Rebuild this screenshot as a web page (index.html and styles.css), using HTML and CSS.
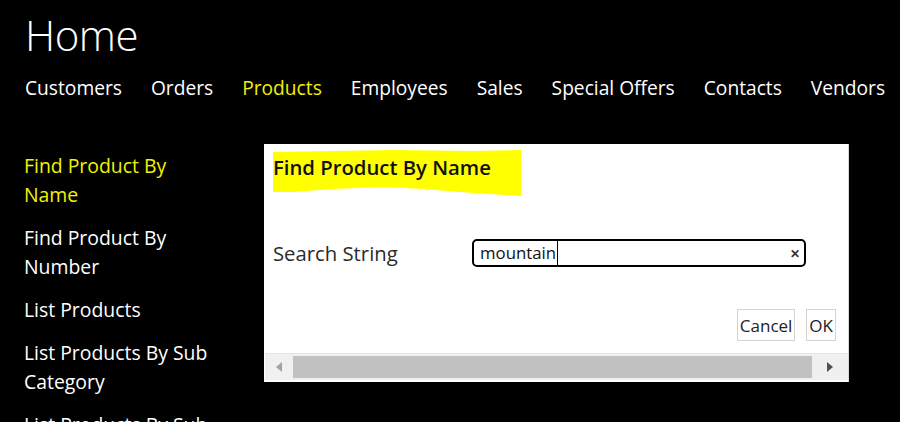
FILE: index.html
```html
<!DOCTYPE html>
<html>
<head>
<meta charset="utf-8">
<link rel="stylesheet" href="styles.css">
</head>
<body>
<header class="top">
  <h1 class="title">Home</h1>
  <nav class="nav">
    <a class="nav-item">Customers</a>
    <a class="nav-item">Orders</a>
    <a class="nav-item active">Products</a>
    <a class="nav-item">Employees</a>
    <a class="nav-item">Sales</a>
    <a class="nav-item">Special Offers</a>
    <a class="nav-item">Contacts</a>
    <a class="nav-item">Vendors</a>
  </nav>
</header>
<main class="main">
  <ul class="side">
    <li class="side-item active">Find Product By Name</li>
    <li class="side-item">Find Product By Number</li>
    <li class="side-item">List Products</li>
    <li class="side-item">List Products By Sub Category</li>
    <li class="side-item">List Products By Sub Model</li>
  </ul>
  <section class="panel">
    <div class="panel-body">
      <div class="heading-wrap"><h2 class="heading">Find Product By Name</h2></div>
      <div class="form-row">
        <label class="label">Search String</label>
        <div class="input">
          <span class="input-text">mountain</span><span class="caret"></span>
          <span class="clear">&#x2715;</span>
        </div>
      </div>
      <div class="buttons">
        <button class="btn">Cancel</button>
        <button class="btn">OK</button>
      </div>
    </div>
    <div class="hscroll">
      <div class="arrow-btn"><svg width="8" height="12" viewBox="0 0 8 12"><path d="M7 1 L1 6 L7 11 Z" fill="#a3a3a3"/></svg></div>
      <div class="thumb"></div>
      <div class="arrow-btn right"><svg width="8" height="12" viewBox="0 0 8 12"><path d="M1 1 L7 6 L1 11 Z" fill="#505050"/></svg></div>
    </div>
  </section>
</main>
</body>
</html>
```
FILE: styles.css
```css
* { box-sizing: border-box; }
html, body { margin: 0; padding: 0; }
body {
  background: #000;
  color: #fff;
  font-family: "Open Sans", "Noto Sans", sans-serif;
  width: 900px;
  height: 422px;
  overflow: hidden;
}
.top { padding: 10px 0 0 25px; }
.title {
  margin: 0;
  font-weight: 300;
  font-size: 42px;
  line-height: 50px;
  letter-spacing: -0.5px;
}
.nav {
  display: flex;
  gap: 29px;
  margin-top: 14px;
  font-size: 19.2px;
  line-height: 28px;
  white-space: nowrap;
}
.nav-item { color: #fff; }
.nav-item.active { color: #f2f200; }
.main {
  display: flex;
  margin-top: 42px;
}
.side {
  list-style: none;
  margin: 7px 0 0 0;
  padding: 0 0 0 24px;
  width: 264px;
  height: 280px;
  flex-shrink: 0;
  display: flex;
  flex-direction: column;
  gap: 14px;
  font-size: 19.4px;
  line-height: 29px;
}
.side-item { width: 192px; }
.side-item.active { color: #f2f200; }
.panel {
  width: 585px;
  height: 238px;
  background: #fff;
  color: #222;
  display: flex;
  flex-direction: column;
  border-right: 1px solid #d8d8d8;
}
.panel-body {
  flex: 1;
  padding: 6px 12px 0 9px;
}
.heading-wrap { display: flex; }
.heading {
  margin: 0;
  width: 248px;
  height: 47px;
  padding: 4px 0 0 0;
  background: #ffff00;
  font-size: 20.3px;
  font-weight: 600;
  line-height: 26px;
  color: #111;
  clip-path: polygon(0 2px, 60px 1px, 120px 0, 200px 1px, 248px 0, 248px 46px, 200px 43px, 150px 39px, 110px 37px, 60px 39px, 20px 42px, 0 42px);
}
.form-row {
  display: flex;
  align-items: center;
  margin-top: 42px;
}
.label {
  width: 199px;
  font-size: 20.3px;
  color: #2a2a2a;
}
.input {
  width: 334px;
  height: 28px;
  border: 2px solid #000;
  border-radius: 5px;
  display: flex;
  align-items: center;
  padding: 0 4px 0 6px;
  position: relative;
}
.input-text {
  font-size: 16.8px;
  color: #111;
  line-height: 20px;
}
.caret {
  width: 1px;
  height: 24px;
  background: #000;
  margin-left: 1px;
}
.clear {
  margin-left: auto;
  font-size: 12px;
  color: #333;
  font-weight: 700;
}
.buttons {
  display: flex;
  justify-content: flex-end;
  gap: 11px;
  margin-top: 42px;
}
.btn {
  font-family: "Open Sans", "Noto Sans", sans-serif;
  font-size: 17px;
  color: #222;
  background: #fff;
  border: 1px solid #d4d4d4;
  height: 32px;
  padding: 0 2px;
}
.hscroll {
  height: 27px;
  margin: 0 0 2px 1px;
  background: #f0f0f0;
  display: flex;
  align-items: stretch;
  border-top: 1px solid #e6e6e6;
}
.arrow-btn {
  width: 28px;
  display: flex;
  align-items: center;
  justify-content: center;
}
.arrow-btn.right { width: 36px; }
.thumb {
  flex: 1;
  background: #c1c1c1;
  margin: 2px 0;
}
```
